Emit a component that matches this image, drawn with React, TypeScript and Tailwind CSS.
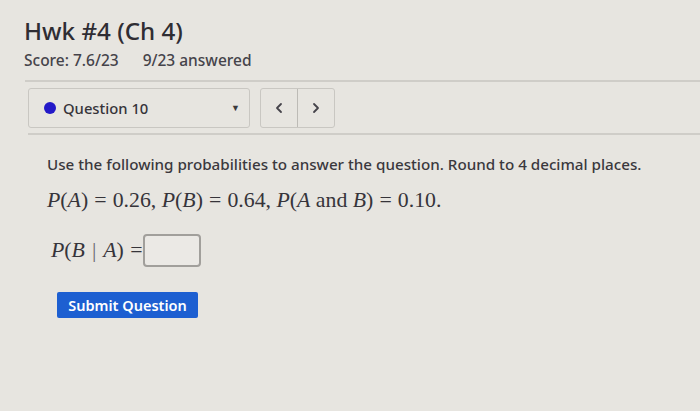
import React from "react";

const sans = { fontFamily: '"Noto Sans", "Open Sans", sans-serif' };
const serif = { fontFamily: '"Liberation Serif", "DejaVu Serif", serif' };

function I({ children }: { children: React.ReactNode }) {
  return <span className="italic">{children}</span>;
}

function Eq() {
  return <span className="mx-[0.28em]">=</span>;
}

function Chevron({ dir }: { dir: "left" | "right" }) {
  return (
    <svg width="10" height="12" viewBox="0 0 10 12" fill="none" stroke="#45434a" strokeWidth="1.8" strokeLinecap="round" strokeLinejoin="round">
      {dir === "left" ? <path d="M7 2 L3 6 L7 10" /> : <path d="M3 2 L7 6 L3 10" />}
    </svg>
  );
}

export default function App() {
  return (
    <div className="w-[700px] h-[411px] overflow-hidden bg-[#e7e5e0] text-[#3b3a3c]" style={sans}>
      <div className="pl-[24px] pt-[16px]">
        <h1 className="text-[24.2px] leading-[30px] font-medium text-[#2f2d33]">Hwk #4 (Ch 4)</h1>
        <div className="mt-[3px] text-[15.5px] leading-[22px] font-medium text-[#45434a]">
          <span>Score: 7.6/23</span>
          <span className="ml-[24px]">9/23 answered</span>
        </div>
      </div>
      <div className="ml-[25px] mt-[9px] h-[2px] bg-[#cfcdc8]" />
      <div className="ml-[28px] mt-[6px] flex items-center gap-[10px]">
        <div className="w-[222px] h-[40px] rounded-[3px] border border-[#c9c7c2] flex items-center pl-[15px] pr-[9px]">
          <span className="w-[12px] h-[12px] rounded-full bg-[#2319c8]" />
          <span className="ml-[7px] text-[14.8px] font-medium text-[#36343a]">Question 10</span>
          <span className="ml-auto text-[9px] text-[#3b3a3c]">▼</span>
        </div>
        <div className="w-[75px] h-[40px] rounded-[3px] border border-[#c9c7c2] flex">
          <div className="w-[37px] flex items-center justify-center border-r border-[#bdbbb6]">
            <Chevron dir="left" />
          </div>
          <div className="flex-1 flex items-center justify-center">
            <Chevron dir="right" />
          </div>
        </div>
      </div>
      <div className="ml-[28px] mt-[5px] h-[2px] bg-[#cfcdc8]" />
      <div className="pl-[47px] pt-[18px]">
        <p className="text-[15.2px] leading-[22px] font-medium text-[#3a383d]">
          Use the following probabilities to answer the question. Round to 4 decimal places.
        </p>
        <p className="mt-[12px] text-[21.8px] leading-[26px] text-[#36343a]" style={serif}>
          <I>P</I>(<I>A</I>)<Eq />0.26, <I>P</I>(<I>B</I>)<Eq />0.64, <I>P</I>(<I>A</I> and <I>B</I>)<Eq />0.10.
        </p>
        <div className="mt-[21px] flex items-center text-[21.8px] text-[#36343a]" style={serif}>
          <span className="ml-[4px]">
            <I>P</I>(<I>B</I><span className="mx-[0.32em] text-[#6a686c]">|</span><I>A</I>)<span className="ml-[0.3em]">=</span>
          </span>
          <span className="w-[58px] h-[33px] rounded-[4px] border-2 border-[#a19f9b] bg-[#ebe9e5]" />
        </div>
        <button className="mt-[25px] ml-[10px] w-[141px] h-[26px] rounded-[2px] bg-[#1d5fd1] text-white text-[14.5px] font-semibold leading-[26px]" style={sans}>
          Submit Question
        </button>
      </div>
    </div>
  );
}
